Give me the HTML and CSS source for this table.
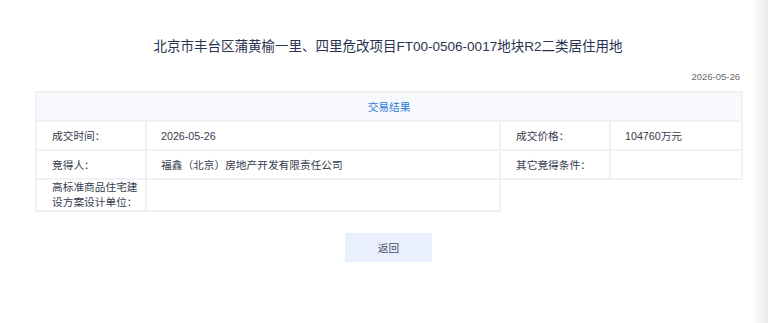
FILE: index.html
```html
<!DOCTYPE html>
<html lang="zh-CN">
<head>
    <meta charset="UTF-8">
    <meta name="viewport" content="width=device-width, initial-scale=1.0">
    <title>交易结果</title>
    <link rel="stylesheet" href="styles.css">
</head>
<body>
    <div class="page">
        <h1 class="notice-title">北京市丰台区蒲黄榆一里、四里危改项目FT00-0506-0017地块R2二类居住用地</h1>
        <div class="notice-date">2026-05-26</div>

        <table class="result-table">
            <colgroup>
                <col class="col-label">
                <col class="col-value">
                <col class="col-label">
                <col class="col-value-sm">
            </colgroup>
            <tr class="result-head">
                <th colspan="4">交易结果</th>
            </tr>
            <tr>
                <td class="label">成交时间：</td>
                <td>2026-05-26</td>
                <td class="label">成交价格：</td>
                <td>104760万元</td>
            </tr>
            <tr>
                <td class="label">竞得人：</td>
                <td>福鑫（北京）房地产开发有限责任公司</td>
                <td class="label">其它竞得条件：</td>
                <td></td>
            </tr>
            <tr class="tall">
                <td class="label">高标准商品住宅建设方案设计单位：</td>
                <td></td>
            </tr>
        </table>

        <div class="actions">
            <button class="back-btn" type="button">返回</button>
        </div>
    </div>

    <div class="side-shade"></div>
</body>
</html>
```

FILE: styles.css
```css
* {
    box-sizing: border-box;
    margin: 0;
    padding: 0;
}

body {
    background: #ffffff;
    color: #353b4d;
    font-family: "Liberation Sans", "Noto Sans CJK SC", sans-serif;
    width: 768px;
    height: 323px;
    overflow: hidden;
}

.page {
    padding: 37px 27px 0 35px;
}

.notice-title {
    font-size: 13.5px;
    font-weight: normal;
    color: #2a3250;
    text-align: center;
    line-height: 20px;
}

.notice-date {
    margin-top: 14px;
    font-size: 9.5px;
    color: #666a73;
    text-align: right;
    line-height: 12px;
    padding-right: 1px;
}

.result-table {
    margin-top: 8px;
    width: 706px;
    border-collapse: collapse;
    table-layout: fixed;
    font-size: 10.7px;
}

.col-label {
    width: 110px;
}

.col-value {
    width: 354px;
}

.col-value-sm {
    width: 132px;
}

.result-table th,
.result-table td {
    border: 2px solid #f0f1f4;
    height: 29px;
    padding: 0 14px;
    text-align: left;
    font-weight: normal;
    vertical-align: middle;
    line-height: 16px;
}

.result-table td.label {
    padding: 0 3px 0 15px;
}

.result-head th {
    background: #f7f9fd;
    color: #2f7ad8;
    text-align: center;
}

.result-table tr.tall td {
    height: 32px;
    line-height: 15px;
}

.actions {
    display: flex;
    justify-content: center;
    margin-top: 21px;
    padding-left: 1px;
}

.back-btn {
    width: 87px;
    height: 29px;
    border: none;
    background: #e9effc;
    color: #4a5068;
    font-family: inherit;
    font-size: 10.7px;
}

.side-shade {
    position: fixed;
    top: 0;
    right: 0;
    width: 17px;
    height: 100%;
    background: linear-gradient(to right, rgba(236, 236, 236, 0), #ebebeb);
}
```
